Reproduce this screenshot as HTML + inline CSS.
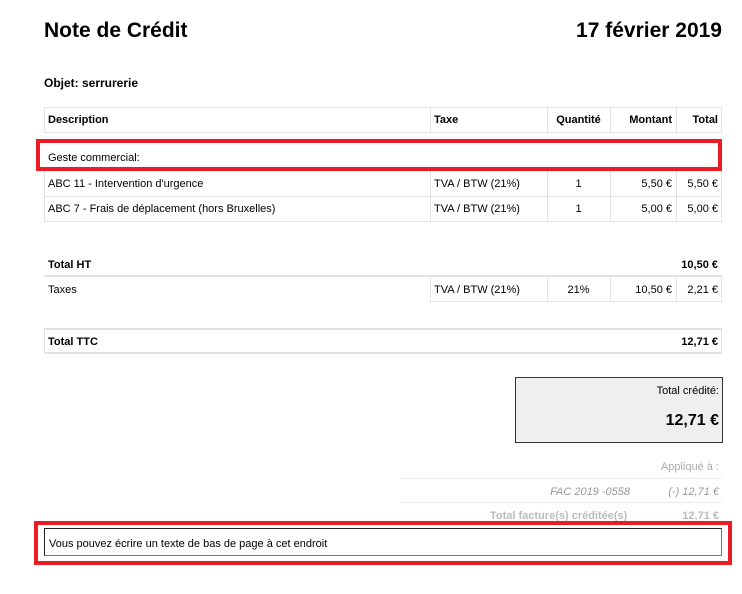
<!DOCTYPE html>
<html><head><meta charset="utf-8"><style>
*{margin:0;padding:0;box-sizing:border-box}
body{width:742px;height:594px;background:#fff;font-family:"Liberation Sans",Arial,sans-serif;color:#000;position:relative;overflow:hidden;font-size:11px}
.a{position:absolute}
.h{font-weight:bold}
.ln{position:absolute;background:#e2e2e2}
.r{text-align:right}
.c{text-align:center}
</style></head><body>
<div class="a h" style="left:44px;top:19px;font-size:21px">Note de Crédit</div>
<div class="a h" style="right:20px;top:19px;font-size:21px">17 février 2019</div>
<div class="a h" style="left:44px;top:76px;font-size:12px">Objet: serrurerie</div>

<!-- header table -->
<div class="a" style="left:44px;top:107px;width:678px;height:26px;border:1px solid #e2e2e2"></div>
<div class="ln" style="left:430px;top:107px;width:1px;height:26px"></div>
<div class="ln" style="left:547px;top:107px;width:1px;height:26px"></div>
<div class="ln" style="left:610px;top:107px;width:1px;height:26px"></div>
<div class="ln" style="left:676px;top:107px;width:1px;height:26px"></div>
<div class="a h" style="left:48px;top:114px">Description</div>
<div class="a h" style="left:434px;top:114px">Taxe</div>
<div class="a h c" style="left:547px;top:114px;width:63px">Quantité</div>
<div class="a h r" style="left:610px;top:114px;width:62px">Montant</div>
<div class="a h r" style="left:676px;top:114px;width:42px">Total</div>

<!-- red box 1 -->
<div class="a" style="left:36px;top:139px;width:686px;height:32px;border:4px solid #ec1c24"></div>
<div class="a" style="left:48px;top:152px">Geste commercial:</div>

<!-- rows -->
<div class="ln" style="left:44px;top:196px;width:678px;height:1px"></div>
<div class="ln" style="left:44px;top:221px;width:678px;height:1px"></div>
<div class="ln" style="left:44px;top:171px;width:1px;height:51px"></div>
<div class="ln" style="left:721px;top:171px;width:1px;height:51px"></div>
<div class="ln" style="left:430px;top:171px;width:1px;height:51px"></div>
<div class="ln" style="left:547px;top:171px;width:1px;height:51px"></div>
<div class="ln" style="left:610px;top:171px;width:1px;height:51px"></div>
<div class="ln" style="left:676px;top:171px;width:1px;height:51px"></div>
<div class="a" style="left:48px;top:178px">ABC 11 - Intervention d'urgence</div>
<div class="a" style="left:434px;top:178px">TVA / BTW (21%)</div>
<div class="a c" style="left:547px;top:178px;width:63px">1</div>
<div class="a r" style="left:610px;top:178px;width:62px">5,50 €</div>
<div class="a r" style="left:676px;top:178px;width:42px">5,50 €</div>
<div class="a" style="left:48px;top:203px">ABC 7 - Frais de déplacement (hors Bruxelles)</div>
<div class="a" style="left:434px;top:203px">TVA / BTW (21%)</div>
<div class="a c" style="left:547px;top:203px;width:63px">1</div>
<div class="a r" style="left:610px;top:203px;width:62px">5,00 €</div>
<div class="a r" style="left:676px;top:203px;width:42px">5,00 €</div>

<!-- totals -->
<div class="a h" style="left:48px;top:259px">Total HT</div>
<div class="a h r" style="left:600px;top:259px;width:118px">10,50 €</div>
<div class="ln" style="left:44px;top:275px;width:678px;height:2px"></div>
<div class="ln" style="left:430px;top:301px;width:292px;height:1px"></div>
<div class="ln" style="left:430px;top:277px;width:1px;height:25px"></div>
<div class="ln" style="left:547px;top:277px;width:1px;height:25px"></div>
<div class="ln" style="left:610px;top:277px;width:1px;height:25px"></div>
<div class="ln" style="left:676px;top:277px;width:1px;height:25px"></div>
<div class="ln" style="left:721px;top:277px;width:1px;height:25px"></div>
<div class="a" style="left:48px;top:284px">Taxes</div>
<div class="a" style="left:434px;top:284px">TVA / BTW (21%)</div>
<div class="a c" style="left:547px;top:284px;width:63px">21%</div>
<div class="a r" style="left:610px;top:284px;width:62px">10,50 €</div>
<div class="a r" style="left:676px;top:284px;width:42px">2,21 €</div>

<div class="a" style="left:44px;top:328px;width:678px;height:26px;border:1px solid #e2e2e2;border-width:2px 1px 2px 1px"></div>
<div class="a h" style="left:48px;top:336px">Total TTC</div>
<div class="a h r" style="left:600px;top:336px;width:118px">12,71 €</div>

<!-- credited box -->
<div class="a" style="left:515px;top:377px;width:208px;height:66px;background:#efefef;border:1px solid #333"></div>
<div class="a r" style="left:520px;top:385px;width:199px">Total crédité:</div>
<div class="a h r" style="left:520px;top:412px;width:199px;font-size:16px">12,71 €</div>

<div class="a r" style="left:520px;top:461px;width:199px;color:#aaa">Appliqué à :</div>
<div class="ln" style="left:400px;top:478px;width:322px;height:1px;background:#ececec"></div>
<div class="a r" style="left:450px;top:486px;width:180px;color:#999;font-style:italic">FAC 2019 -0558</div>
<div class="a r" style="left:640px;top:486px;width:79px;color:#999;font-style:italic">(-) 12,71 €</div>
<div class="ln" style="left:400px;top:502px;width:322px;height:1px;background:#ececec"></div>
<div class="a h" style="left:490px;top:510px;color:#bbb">Total facture(s) créditée(s)</div>
<div class="a h r" style="left:640px;top:510px;width:79px;color:#bbb">12,71 €</div>

<!-- red box 2 -->
<div class="a" style="left:34px;top:521px;width:698px;height:44px;background:#fff;border:4px solid #ec1c24"></div>
<div class="a" style="left:44px;top:528px;width:678px;height:28px;border:1px solid #222;border-right-color:#777;border-bottom-color:#777"></div>
<div class="a" style="left:49px;top:538px">Vous pouvez écrire un texte de bas de page à cet endroit</div>
</body></html>
